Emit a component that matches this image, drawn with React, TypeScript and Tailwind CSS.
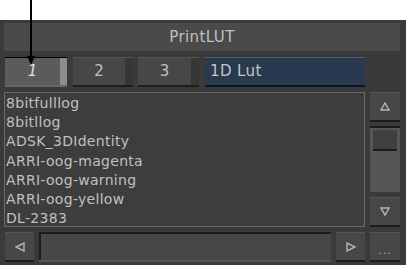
import React from "react";

const items = [
  "8bitfulllog",
  "8bitllog",
  "ADSK_3DIdentity",
  "ARRI-oog-magenta",
  "ARRI-oog-warning",
  "ARRI-oog-yellow",
  "DL-2383",
];

function TabButton({ label, width }: { label: string; width: string }) {
  return (
    <div className={`flex h-[30px] ${width} flex-col`}>
      <div className="flex flex-1 border-t border-[#555555] bg-[#474747]">
        <div className="flex flex-1 items-center justify-center text-[15px] text-[#c0c0c0]">{label}</div>
        <div className="w-[8px] bg-[#363636]" />
      </div>
      <div className="h-[2px] bg-[#1c1c1c]" />
    </div>
  );
}

function PlainButton({ width, children }: { width: string; children: React.ReactNode }) {
  return (
    <div className={`flex h-[30px] ${width} flex-col`}>
      <div className="flex flex-1 items-center justify-center border-t border-[#555555] bg-[#474747]">
        {children}
      </div>
      <div className="h-[2px] bg-[#1c1c1c]" />
    </div>
  );
}

function Tri({ dir }: { dir: "up" | "down" | "left" | "right" }) {
  const pts =
    dir === "up"
      ? "5,1 9,8 1,8"
      : dir === "down"
      ? "1,1 9,1 5,8"
      : dir === "left"
      ? "1,5 9,1 9,9"
      : "1,1 9,5 1,9";
  return (
    <svg width="10" height="10" viewBox="0 0 10 10">
      <polygon points={pts} fill="none" stroke="#b4b4b4" strokeWidth="1.4" />
    </svg>
  );
}

export default function App() {
  return (
    <div
      className="relative flex h-[265px] w-[406px] flex-col bg-white"
      style={{ fontFamily: '"DejaVu Sans", sans-serif' }}
    >
      <div className="h-[20px]" />
      <div className="flex flex-1 flex-col bg-[#3a3a3a] pl-[4px] pr-[6px] pt-[3px]">
        {/* title */}
        <div className="flex h-[28px] items-center justify-center bg-[#4a4a4a] text-[15px] tracking-[0.4px] text-[#c0c0c0]">
          PrintLUT
        </div>

        {/* tabs */}
        <div className="mt-[6px] flex pl-[1px]">
          <div className="flex h-[30px] w-[62px] flex-col">
            <div className="h-[1px] bg-black" />
            <div className="flex flex-1 bg-[#5b5b5b]">
              <div className="flex flex-1 items-center justify-center text-[15px] italic text-[#e0e0e0]">1</div>
              <div className="w-[7px] bg-[#8d8d8d]" />
            </div>
            <div className="h-[2px] bg-[#676767]" />
          </div>
          <div className="ml-[6px]">
            <TabButton label="2" width="w-[60px]" />
          </div>
          <div className="ml-[5px]">
            <TabButton label="3" width="w-[61px]" />
          </div>
          <div className="ml-[6px] flex h-[30px] w-[160px] flex-col">
            <div className="h-[1px] bg-[#4e5e74]" />
            <div className="flex flex-1 items-center bg-[#293a50] pl-[5px] text-[15px] tracking-[0.4px] text-[#c4c4c4]">
              1D Lut
            </div>
            <div className="h-[2px] bg-[#0b1326]" />
          </div>
        </div>

        {/* list + scrollbar */}
        <div className="mt-[5px] flex h-[135px]">
          <div className="w-[361px] border border-[#6a6a6a] bg-[#3d3d3d] pl-[1px] pt-[1px]">
            {items.map((it) => (
              <div
                key={it}
                className="h-[19.2px] text-[14px] leading-[19.2px] tracking-[0.3px] text-[#c0c0c0]"
              >
                {it}
              </div>
            ))}
          </div>
          <div className="ml-[5px] flex w-[30px] flex-col">
            <PlainButton width="w-[30px]">
              <Tri dir="up" />
            </PlainButton>
            <div className="mt-[4px] flex h-[66px] flex-col border-t-2 border-[#1c1c1c] bg-[#565656] px-[3px] pt-[2px]">
              <div className="h-[21px] border-b-2 border-[#1c1c1c] bg-[#404040]" />
            </div>
            <div className="mt-[5px]">
              <PlainButton width="w-[30px]">
                <Tri dir="down" />
              </PlainButton>
            </div>
          </div>
        </div>

        {/* bottom row */}
        <div className="mt-[5px] flex pl-[1px]">
          <PlainButton width="w-[29px]">
            <Tri dir="left" />
          </PlainButton>
          <div className="ml-[5px] flex h-[30px] w-[292px] flex-col">
            <div className="h-[2px] bg-[#1c1c1c]" />
            <div className="flex flex-1 border-l-2 border-[#1c1c1c] bg-[#474747]" />
            <div className="h-[2px] bg-[#555555]" />
          </div>
          <div className="ml-[5px]">
            <PlainButton width="w-[29px]">
              <Tri dir="right" />
            </PlainButton>
          </div>
          <div className="ml-[5px]">
            <PlainButton width="w-[30px]">
              <span className="pt-[8px] text-[11px] leading-none tracking-[1px] text-[#a8a8a8]">...</span>
            </PlainButton>
          </div>
        </div>
      </div>

      {/* pointer arrow */}
      <div className="absolute left-[30px] top-0 h-[58px] w-[2px] bg-black" />
      <svg className="absolute left-[27px] top-[56px]" width="8" height="10" viewBox="0 0 8 10">
        <polygon points="0,0 8,0 4,9" fill="black" />
      </svg>
    </div>
  );
}
